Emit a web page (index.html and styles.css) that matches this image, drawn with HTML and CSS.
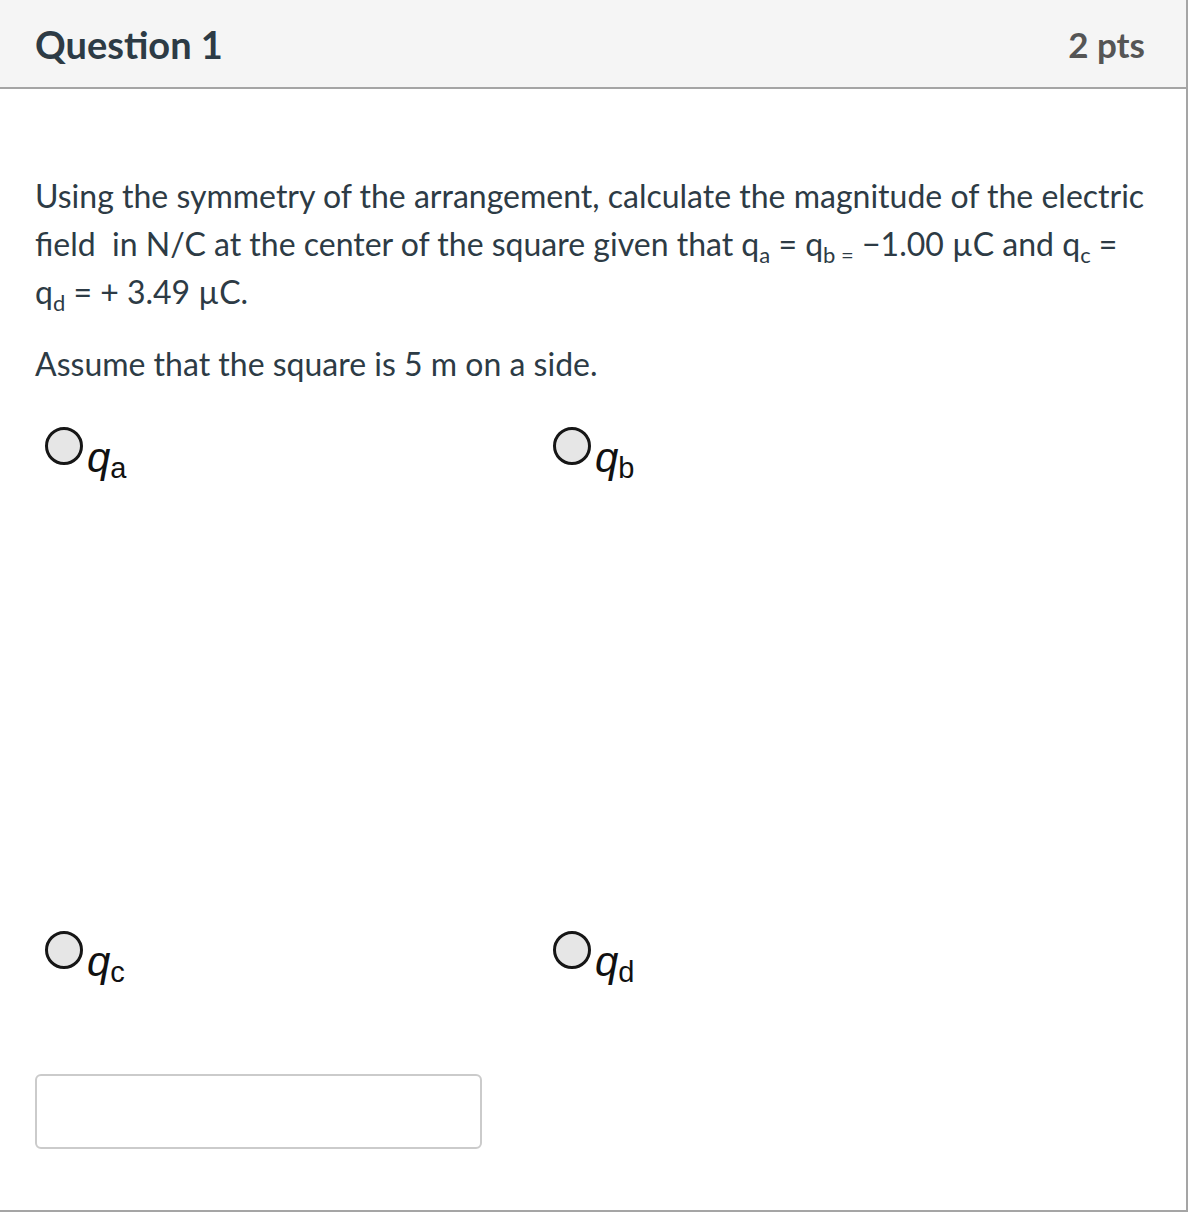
FILE: index.html
```html
<html>

<head>
  <meta charset="UTF-8">
  <title>Question 1</title>
  <link rel="stylesheet" href="styles.css">
</head>

<body>

  <div class="question">

    <div class="header">
      <span class="name">Question 1</span>
      <span class="points">2 pts</span>
    </div>

    <div class="text">
      <p>Using the symmetry of the arrangement, calculate the magnitude of the electric field&nbsp; in N/C at the center of the square given that q<sub>a</sub> = q<sub>b =</sub> &minus;1.00 &micro;C and q<sub>c</sub> = q<sub>d</sub> = + 3.49 &micro;C.</p>
      <p>Assume that the square is 5 m on a side.</p>
    </div>

    <!-- answers: 2 x 2 -->
    <div class="answers">
      <label class="answer"><span class="radio"></span><span class="var">q<sub>a</sub></span></label>
      <label class="answer"><span class="radio"></span><span class="var">q<sub>b</sub></span></label>
      <label class="answer"><span class="radio"></span><span class="var">q<sub>c</sub></span></label>
      <label class="answer"><span class="radio"></span><span class="var">q<sub>d</sub></span></label>
    </div>

    <div class="footer">
      <input class="answer_box" type="text">
    </div>

  </div>

</body>

</html>
```

FILE: styles.css
```css
/* reset */
* {
  margin: 0;
  padding: 0;
  box-sizing: border-box;
}
body {
  background: #fff;
  font-family: Lato, "Noto Sans", sans-serif;
  color: #2d3b45;
}
.question {
  width: 1188px;
  border-right: 2px solid #a5a5a5;
  border-bottom: 2px solid #a5a5a5;
}
.header {
  height: 89px;
  background: #f5f5f5;
  border-bottom: 2px solid #a5a5a5;
  display: flex;
  justify-content: space-between;
  align-items: center;
  padding: 0 41px 0 35px;
}
.header .name {
  font-size: 38px;
  font-weight: bold;
}
.header .points {
  font-size: 35px;
  font-weight: bold;
  color: #555;
}
.text {
  padding: 83px 35px 0;
  font-size: 32px;
  line-height: 48px;
}
.text p {
  margin-bottom: 24px;
}
.text sub {
  font-size: 22px;
  line-height: 0;
  vertical-align: -7px;
}
.answers {
  display: grid;
  grid-template-columns: 508px 1fr;
  grid-template-rows: 504px auto;
  padding: 8px 0 0 45px;
}
.answer {
  display: flex;
  align-items: flex-start;
  height: 64px;
}
.radio {
  flex: none;
  width: 38px;
  height: 38px;
  margin-top: 7px;
  border: 3px solid #161616;
  border-radius: 50%;
  background: #e6e6e6;
}
.var {
  margin: 16px 0 0 4px;
  font-family: "Liberation Sans", Arial, sans-serif;
  font-style: italic;
  font-size: 42px;
  line-height: 44px;
  color: #111;
}
.var sub {
  font-style: normal;
  font-size: 29px;
  line-height: 0;
  vertical-align: -6px;
}
.footer {
  padding: 86px 35px 61px;
}
.answer_box {
  display: block;
  width: 447px;
  height: 75px;
  border: 2px solid #cbcbcb;
  border-radius: 6px;
  outline: none;
  background: #fff;
}
```
